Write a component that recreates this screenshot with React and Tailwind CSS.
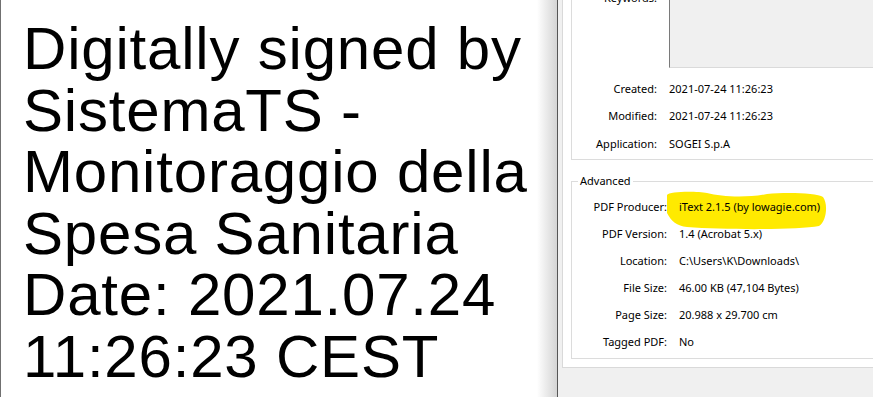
import React from 'react';

const descRows = [
  ['Created:', '2021-07-24 11:26:23'],
  ['Modified:', '2021-07-24 11:26:23'],
  ['Application:', 'SOGEI S.p.A'],
];

const advRows = [
  ['PDF Version:', '1.4 (Acrobat 5.x)'],
  ['Location:', 'C:\\Users\\K\\Downloads\\'],
  ['File Size:', '46.00 KB (47,104 Bytes)'],
  ['Page Size:', '20.988 x 29.700 cm'],
  ['Tagged PDF:', 'No'],
];

const pageLines = [
  'Digitally signed by',
  'SistemaTS -',
  'Monitoraggio della',
  'Spesa Sanitaria',
  'Date: 2021.07.24',
  '11:26:23 CEST',
];

function Highlight() {
  return (
    <svg
      className="absolute -left-[12px] -top-[8px] w-[160px] h-[40px]"
      viewBox="0 0 160 40"
    >
      <path
        d="M0 4 C2 0, 30 0, 40 2 C55 6, 80 7, 100 3 C120 1, 150 2, 156 6 C161 12, 160 30, 152 35 C130 39, 60 39, 20 36 C10 35, 4 30, 0 22 Z"
        fill="#ffea00"
      />
    </svg>
  );
}

export default function App() {
  return (
    <div className="flex h-[397px] w-[873px] overflow-hidden bg-white">
      {/* pdf page */}
      <div className="flex shrink-0 border-l border-[#707070]">
        <div
          className="w-[536px] bg-white pl-[22px] pt-[18px] text-[60px] leading-[61.6px] tracking-[0.8px] text-black whitespace-nowrap"
          style={{ fontFamily: '"Liberation Sans", Arial, sans-serif' }}
        >
          {pageLines.map((l) => (
            <div key={l}>{l}</div>
          ))}
        </div>
        <div className="w-[20px] bg-gradient-to-r from-white to-[#d4d4d4]" />
      </div>

      {/* properties dialog */}
      <div
        className="flex-1 overflow-hidden border-l border-[#555555] bg-[#f0f0f0] pl-[4px] text-[11px] text-black"
        style={{ fontFamily: '"Noto Sans", "Open Sans", sans-serif' }}
      >
        <div className="w-[400px] h-[368px] border-l border-b border-[#d9d9d9] bg-white pl-[8px] pb-[8px]">
          {/* description group */}
          <div className="h-[160px] border-l border-b border-[#dcdcdc] flex flex-col">
            <div className="flex h-[68px]">
              <div className="w-[85px] text-right mt-[-10px]">Keywords:</div>
              <div className="ml-[12px] flex-1 bg-[#f0f0f0] border-l border-[#7a7a7a] border-b border-b-[#dadada]" />
            </div>
            <div className="pt-[7px]">
              {descRows.map(([k, v]) => (
                <div key={k} className="flex items-center h-[27.5px]">
                  <div className="w-[85px] text-right">{k}</div>
                  <div className="ml-[12px]">{v}</div>
                </div>
              ))}
            </div>
          </div>

          {/* advanced group */}
          <div className="relative mt-[21px] h-[178px] border border-r-0 border-[#dcdcdc] pt-[11.5px]">
            <div className="absolute left-[6px] -top-[9px] bg-white px-[2px] leading-[16px]">
              Advanced
            </div>
            <div className="flex items-center h-[27px]">
              <div className="w-[95px] text-right">PDF Producer:</div>
              <div className="relative ml-[12px]">
                <Highlight />
                <span className="relative">iText 2.1.5 (by lowagie.com)</span>
              </div>
            </div>
            {advRows.map(([k, v]) => (
              <div key={k} className="flex items-center h-[27px]">
                <div className="w-[95px] text-right">{k}</div>
                <div className="ml-[12px]">{v}</div>
              </div>
            ))}
          </div>
        </div>
      </div>
    </div>
  );
}
